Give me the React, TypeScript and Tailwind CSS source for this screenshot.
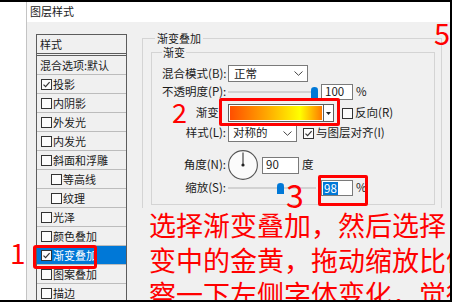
import React from 'react';

type StyleItem = {
  label: string;
  checked?: boolean;
  noBox?: boolean;
  indent?: boolean;
  active?: boolean;
};

const styleItems: StyleItem[] = [
  { label: '混合选项:默认', noBox: true },
  { label: '投影', checked: true },
  { label: '内阴影' },
  { label: '外发光' },
  { label: '内发光' },
  { label: '斜面和浮雕' },
  { label: '等高线', indent: true },
  { label: '纹理', indent: true },
  { label: '光泽' },
  { label: '颜色叠加' },
  { label: '渐变叠加', checked: true, active: true },
  { label: '图案叠加' },
  { label: '描边' },
];

function CheckBox({ checked }: { checked?: boolean }) {
  return (
    <span className="flex h-[11px] w-[11px] shrink-0 items-center justify-center border border-[#333] bg-[#fcfcfc]">
      {checked && (
        <svg width="9" height="9" viewBox="0 0 9 9">
          <path d="M1.5 4.6 L3.6 6.7 L7.6 2.2" fill="none" stroke="#333" strokeWidth="1.2" />
        </svg>
      )}
    </span>
  );
}

function Chevron() {
  return (
    <svg width="9" height="5" viewBox="0 0 9 5">
      <path d="M0.5 0.5 L4.5 4.3 L8.5 0.5" fill="none" stroke="#444" strokeWidth="1" />
    </svg>
  );
}

function Slider({ handleClass }: { handleClass: string }) {
  // track + blue thumb
  return (
    <div className="relative ml-[2px] h-[16px] w-[90px] shrink-0">
      <div className="absolute left-0 top-[7px] h-[2px] w-[88px] bg-[#d2d2d2]" />
      <svg className={`absolute top-[3px] ${handleClass}`} width="7" height="11" viewBox="0 0 7 11">
        <path d="M0 3.2 Q0 0 3.5 0 Q7 0 7 3.2 V11 H0 Z" fill="#0078d7" />
      </svg>
    </div>
  );
}

function Label({ children, extra = '' }: { children: React.ReactNode; extra?: string }) {
  return <div className={`w-[64px] shrink-0 whitespace-nowrap text-right ${extra}`}>{children}</div>;
}

export default function App() {
  return (
    <div className="relative flex h-[302px] w-[452px] overflow-hidden border-y-2 border-r-2 border-black bg-white font-['Noto_Sans_CJK_SC','Noto_Sans',sans-serif] text-[#1b1b1b]">
      <div className="w-[26px] shrink-0" />

      <div className="flex flex-1 flex-col border-l border-[#c4c4c4]">
        {/* title bar */}
        <div className="h-[20px] shrink-0 pl-[3px] pt-[2px] text-[11px] leading-[14px]">图层样式</div>

        <div className="flex flex-1 bg-[#f0f0f0] pl-[9px]">
          {/* styles list */}
          <div className="mt-[12px] w-[91px] shrink-0 border-x border-t border-[#5c5c5c] text-[11px]">
            <div className="flex h-[19px] items-center border-b border-[#5c5c5c] pl-[3px]">样式</div>
            <div className="h-[2px] border-b border-[#5c5c5c]" />
            {styleItems.map((it) => (
              <div
                key={it.label}
                className={`flex h-[19px] items-center gap-[1px] whitespace-nowrap border-b border-[#bcbcbc] ${
                  it.noBox ? 'pl-[3px]' : it.indent ? 'pl-[14px]' : 'pl-[4px]'
                } ${it.active ? 'bg-[#0078d7] text-white' : ''}`}
              >
                {!it.noBox && <CheckBox checked={it.checked} />}
                <span>{it.label}</span>
              </div>
            ))}
          </div>

          {/* right side */}
          <div className="ml-[15px] mt-[9px] flex w-[300px] shrink-0 flex-col">
            <fieldset className="border border-b-0 border-[#d4d4d4] pb-[3px] pl-[8px] pr-[6px]">
              <legend className="ml-[4px] px-[2px] text-[11px] leading-[14px]">渐变叠加</legend>
              <fieldset className="border border-[#d4d4d4] pb-[8px] pl-[10px] pt-[6px] text-[11.5px]">
                <legend className="px-[1px] text-[11px] leading-[14px]">渐变</legend>

                {/* blend mode */}
                <div className="flex h-[17px] items-center">
                  <Label>混合模式(B):</Label>
                  <div className="ml-[2px] flex h-[17px] w-[80px] items-center justify-between border border-[#7a7a7a] bg-white pl-[5px] pr-[4px]">
                    <span>正常</span>
                    <Chevron />
                  </div>
                </div>

                {/* opacity */}
                <div className="mt-[2px] flex h-[16px] items-center">
                  <Label>不透明度(P):</Label>
                  <Slider handleClass="left-[83px]" />
                  <div className="ml-[3px] flex h-[16px] w-[32px] items-center border border-[#7a7a7a] bg-white pl-[3px]">100</div>
                  <span className="ml-[3px]">%</span>
                </div>

                {/* gradient */}
                <div className="mt-[4px] flex h-[18px] items-center">
                  <Label extra="pr-[4px]">渐变:</Label>
                  <div className="ml-[2px] flex h-[18px] w-[106px] border border-[#5e5e5e] bg-white">
                    <div className="m-[1px] flex-1 bg-[linear-gradient(to_right,#ff4e00_0%,#ffa800_40%,#ffff00_76%,#ff7a00_100%)]" />
                    <div className="flex w-[10px] items-center justify-center border-l border-[#5e5e5e]">
                      <svg width="5" height="3" viewBox="0 0 5 3">
                        <path d="M0 0 H5 L2.5 3 Z" fill="#222" />
                      </svg>
                    </div>
                  </div>
                  <div className="ml-[8px] flex items-center gap-[2px]">
                    <CheckBox />
                    <span>反向(R)</span>
                  </div>
                </div>

                {/* style */}
                <div className="mt-[2px] flex h-[18px] items-center">
                  <Label>样式(L):</Label>
                  <div className="ml-[2px] flex h-[18px] w-[69px] items-center justify-between border border-[#7a7a7a] bg-white pl-[4px] pr-[4px]">
                    <span>对称的</span>
                    <Chevron />
                  </div>
                  <div className="ml-[6px] flex items-center gap-[2px]">
                    <CheckBox checked />
                    <span>与图层对齐(I)</span>
                  </div>
                </div>

                {/* angle */}
                <div className="mt-[8px] flex h-[30px] items-center">
                  <Label>角度(N):</Label>
                  <svg className="ml-[2px] shrink-0" width="30" height="30" viewBox="0 0 30 30">
                    <circle cx="15" cy="15" r="14.4" fill="#fbfbfb" stroke="#555" strokeWidth="1.1" />
                    <line x1="15" y1="15" x2="15" y2="2.5" stroke="#222" strokeWidth="1" />
                    <circle cx="15" cy="15" r="1.6" fill="#222" />
                  </svg>
                  <div className="ml-[4px] flex h-[17px] w-[37px] items-center border border-[#7a7a7a] bg-white pl-[3px]">90</div>
                  <span className="ml-[3px]">度</span>
                </div>

                {/* scale */}
                <div className="flex h-[16px] items-center">
                  <Label>缩放(S):</Label>
                  <Slider handleClass="left-[49px]" />
                  <div className="ml-[3px] flex h-[16px] w-[32px] items-center border border-[#7a7a7a] bg-white pl-[1px]">
                    <span className="bg-[#0078d7] px-[1px] leading-[13px] text-white">98</span>
                  </div>
                  <span className="ml-[3px]">%</span>
                </div>
              </fieldset>
            </fieldset>

            <div className="ml-[7px] whitespace-nowrap text-[27px] leading-[34.5px] text-[#ff0000]">
              <div>选择渐变叠加，然后选择</div>
              <div>变中的金黄，拖动缩放比例</div>
              <div>察一下左侧字体变化，觉得</div>
            </div>
          </div>
        </div>
      </div>

      {/* annotations */}
      <div className="absolute left-[33px] top-[243px] h-[24px] w-[64px] rounded-[3px] border-[3px] border-[#ff0000]" />
      <div className="absolute left-[219px] top-[96px] h-[28px] w-[121px] rounded-[2px] border-[3px] border-[#ff0000]" />
      <div className="absolute left-[318px] top-[173px] h-[31px] w-[50px] rounded-[2px] border-[3px] border-[#ff0000]" />
      <span className="absolute left-[10px] top-[236px] text-[28px] leading-none text-[#ff0000]">1</span>
      <span className="absolute left-[172px] top-[96px] text-[27px] leading-none text-[#ff0000]">2</span>
      <span className="absolute left-[286px] top-[176px] text-[32px] leading-none text-[#ff0000]">3</span>
      <span className="absolute left-[434px] top-[16px] text-[29px] leading-none text-[#ff0000]">5</span>
    </div>
  );
}
